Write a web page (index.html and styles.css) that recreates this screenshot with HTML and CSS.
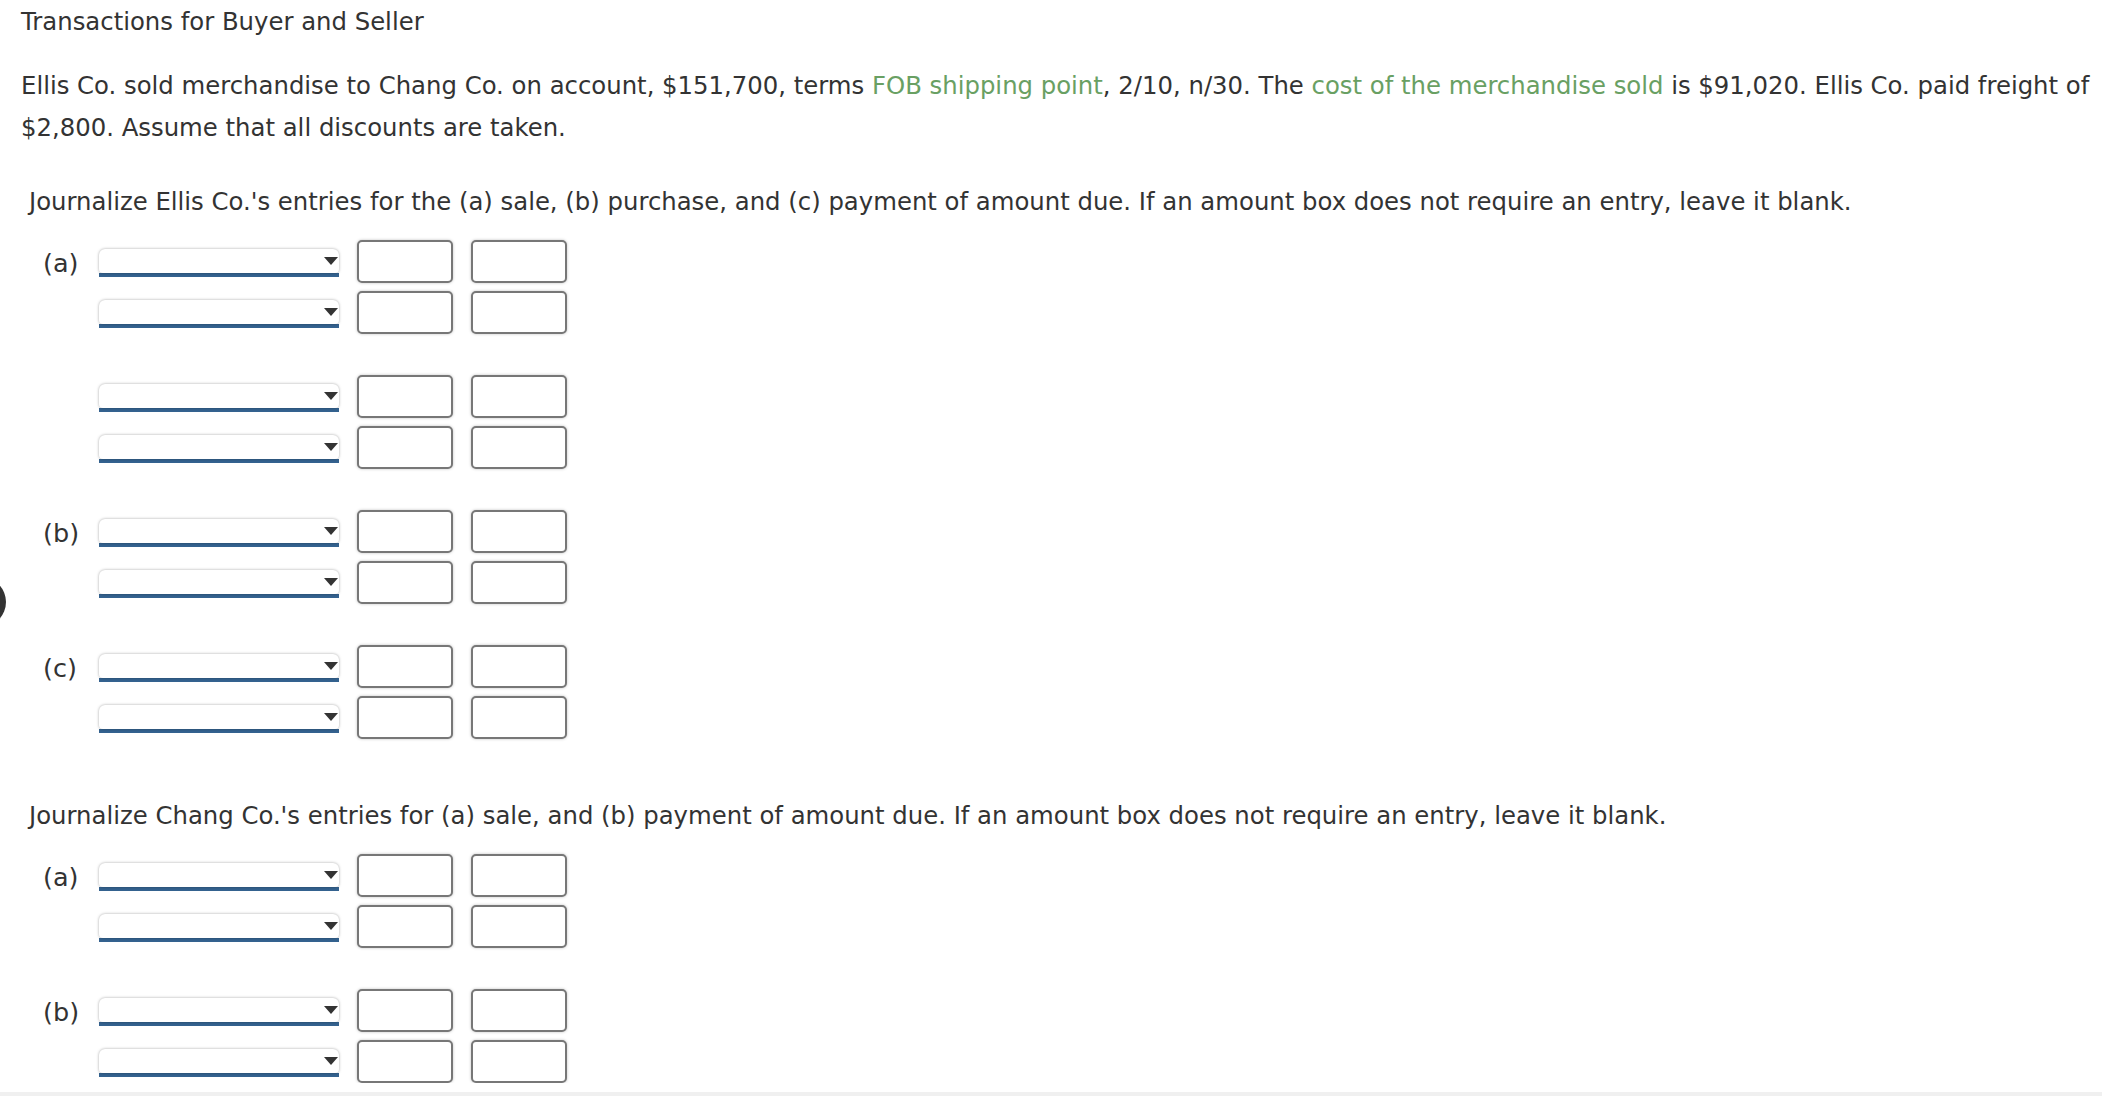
FILE: index.html
```html
<!DOCTYPE html>
<html lang="en">
<head>
<meta charset="utf-8">
<title>Transactions for Buyer and Seller</title>
<link rel="stylesheet" href="styles.css">
</head>
<body>
<div class="page">
  <h1 class="title">Transactions for Buyer and Seller</h1>
  <p class="problem">Ellis Co. sold merchandise to Chang Co. on account, $151,700, terms <span class="term">FOB shipping point</span>, 2/10, n/30. The <span class="term">cost of the merchandise sold</span> is $91,020. Ellis Co. paid freight of $2,800. Assume that all discounts are taken.</p>

  <section class="part">
    <p class="instr">Journalize Ellis Co.'s entries for the (a) sale, (b) purchase, and (c) payment of amount due. If an amount box does not require an entry, leave it blank.</p>
    <div class="entries">
      <div class="entry">
        <div class="label">(a)</div>
        <div class="rows">
          <div class="row"><div class="select"><div class="face"><span class="arrow"></span></div><div class="line"></div></div><div class="box"></div><div class="box"></div></div>
          <div class="row"><div class="select"><div class="face"><span class="arrow"></span></div><div class="line"></div></div><div class="box"></div><div class="box"></div></div>
        </div>
      </div>
      <div class="entry">
        <div class="label"></div>
        <div class="rows">
          <div class="row"><div class="select"><div class="face"><span class="arrow"></span></div><div class="line"></div></div><div class="box"></div><div class="box"></div></div>
          <div class="row"><div class="select"><div class="face"><span class="arrow"></span></div><div class="line"></div></div><div class="box"></div><div class="box"></div></div>
        </div>
      </div>
      <div class="entry">
        <div class="label">(b)</div>
        <div class="rows">
          <div class="row"><div class="select"><div class="face"><span class="arrow"></span></div><div class="line"></div></div><div class="box"></div><div class="box"></div></div>
          <div class="row"><div class="select"><div class="face"><span class="arrow"></span></div><div class="line"></div></div><div class="box"></div><div class="box"></div></div>
        </div>
      </div>
      <div class="entry">
        <div class="label">(c)</div>
        <div class="rows">
          <div class="row"><div class="select"><div class="face"><span class="arrow"></span></div><div class="line"></div></div><div class="box"></div><div class="box"></div></div>
          <div class="row"><div class="select"><div class="face"><span class="arrow"></span></div><div class="line"></div></div><div class="box"></div><div class="box"></div></div>
        </div>
      </div>
    </div>
  </section>

  <section class="part part-second">
    <p class="instr">Journalize Chang Co.'s entries for (a) sale, and (b) payment of amount due. If an amount box does not require an entry, leave it blank.</p>
    <div class="entries">
      <div class="entry">
        <div class="label">(a)</div>
        <div class="rows">
          <div class="row"><div class="select"><div class="face"><span class="arrow"></span></div><div class="line"></div></div><div class="box"></div><div class="box"></div></div>
          <div class="row"><div class="select"><div class="face"><span class="arrow"></span></div><div class="line"></div></div><div class="box"></div><div class="box"></div></div>
        </div>
      </div>
      <div class="entry">
        <div class="label">(b)</div>
        <div class="rows">
          <div class="row"><div class="select"><div class="face"><span class="arrow"></span></div><div class="line"></div></div><div class="box"></div><div class="box"></div></div>
          <div class="row"><div class="select"><div class="face"><span class="arrow"></span></div><div class="line"></div></div><div class="box"></div><div class="box"></div></div>
        </div>
      </div>
    </div>
  </section>
</div>
<div class="side-dot"></div>
<div class="bottom-edge"></div>
</body>
</html>
```

FILE: styles.css
```css
html, body {
  background: #ffffff;
}
body {
  margin: 8px;
  font-family: "DejaVu Sans", Verdana, sans-serif;
  font-size: 24.35px;
  color: #333333;
  overflow: hidden;
}
.page {
  padding-left: 13px;
}
.title {
  margin: 0;
  font-size: 24.35px;
  font-weight: normal;
  line-height: 28px;
}
.problem {
  margin: 29px -12px 0 0;
  line-height: 42px;
}
.term {
  color: #69a063;
}
.part {
  margin: 0;
}
.part-second {
  margin-top: 63px;
}
.instr {
  margin: 39px 0 0;
  padding-left: 8px;
  line-height: 28px;
}
.entries {
  margin-top: 24px;
  padding-left: 22px;
}
.entry {
  display: flex;
}
.entry + .entry {
  margin-top: 41px;
}
.label {
  width: 56px;
  flex: none;
  margin-top: 9px;
  font-size: 25.5px;
  line-height: 28px;
}
.rows {
  display: flex;
  flex-direction: column;
  gap: 8px;
}
.row {
  display: flex;
  align-items: flex-start;
  gap: 18px;
  height: 43px;
}
.select {
  width: 240px;
  margin-top: 9px;
}
.face {
  position: relative;
  height: 24px;
  background: #ffffff;
  border-radius: 6px 6px 4px 4px;
  box-shadow: 0 0 3px rgba(0, 0, 0, 0.35);
}
.arrow {
  position: absolute;
  right: 1px;
  top: 8px;
  width: 0;
  height: 0;
  border-left: 7px solid transparent;
  border-right: 7px solid transparent;
  border-top: 8px solid #333333;
}
.line {
  height: 4px;
  background: #34628f;
}
.box {
  box-sizing: border-box;
  width: 96px;
  height: 43px;
  border: 2px solid #777777;
  border-radius: 5px;
  background: #ffffff;
  box-shadow: 0 0 3px rgba(0, 0, 0, 0.25);
}
.side-dot {
  position: absolute;
  left: -44px;
  top: 577px;
  width: 50px;
  height: 50px;
  border-radius: 50%;
  background: #333333;
}
.bottom-edge {
  position: fixed;
  left: 0;
  right: 0;
  bottom: 0;
  height: 4px;
  background: #f0f0f0;
}
```
